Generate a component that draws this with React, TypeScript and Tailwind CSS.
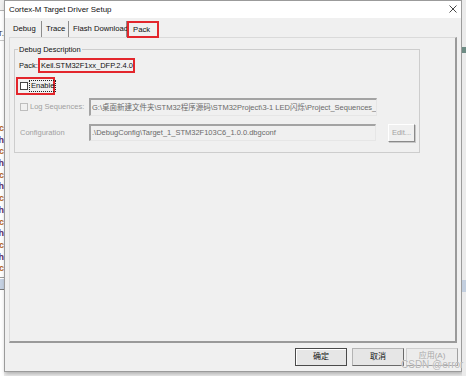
import React from "react";

const editorLetters = [
  { ch: "c", color: "text-[#b5651d]" },
  { ch: "h", color: "text-[#5b2a6e]" },
];

const LeftStrip: React.FC = () => {
  const rows = Array.from({ length: 13 }, (_, i) => editorLetters[i % 2]);
  return (
    <div className="flex h-full w-[4px] shrink-0 flex-col overflow-hidden bg-white">
      <div className="h-[11px] shrink-0 bg-[#f0f0f0] border-b border-[#b4b4b4]" />
      <div className="mt-[18px] flex h-[10px] shrink-0 justify-end text-[8px] leading-[10px] text-[#333]">
        <span className="whitespace-nowrap">T.</span>
      </div>
      <div className="mt-[1px] h-px shrink-0 bg-[#c8c8c8]" />
      <div className="mt-[82px] flex shrink-0 flex-col">
        {rows.map((r, i) => (
          <div
            key={i}
            className={`flex h-[11.7px] justify-end text-[9px] font-bold leading-[11.7px] ${r.color}`}
          >
            <span>{r.ch}</span>
          </div>
        ))}
      </div>
      <div className="mt-[2px] h-px shrink-0 bg-[#9a9a9a]" />
      <div className="mt-[1px] h-[10px] shrink-0 bg-[#c6d2e3]" />
      <div className="h-px shrink-0 bg-[#7a7a7a]" />
    </div>
  );
};

const RightStrip: React.FC = () => (
  <div className="flex h-full flex-1 flex-col bg-[#ebebeb]">
    <div className="mt-[47px] h-[6px] bg-[#6e8c84]" />
    <div className="mt-[227px] h-[12px] bg-[#c3cfdf]" />
  </div>
);

const Tab: React.FC<{ label: string; width: string }> = ({ label, width }) => (
  <div className={`flex h-[16px] items-center border-r border-[#8c8c8c] pl-[4px] ${width}`}>
    <span className="whitespace-nowrap">{label}</span>
  </div>
);

const SunkenField: React.FC<{ text: string; width: string; height: string }> = ({
  text,
  width,
  height,
}) => (
  <div
    className={`flex items-center overflow-hidden border-t-2 border-l-2 border-r border-b border-t-[#a3a3a3] border-l-[#a3a3a3] border-r-[#e6e6e6] border-b-[#e6e6e6] bg-[#f0f0f0] pl-[1px] text-[#6a6a6a] ${width} ${height}`}
  >
    <span className="whitespace-nowrap">{text}</span>
  </div>
);

export default function App() {
  return (
    <div className="relative flex h-[376px] w-[466px] overflow-hidden bg-[#ececec] font-['Liberation_Sans','Noto_Sans_CJK_SC',sans-serif] text-[7.5px] leading-none text-[#111]">
      <LeftStrip />

      <div className="flex h-[372px] w-[458px] shrink-0 flex-col border border-[#9b9b9b] bg-[#f0f0f0] shadow-[1px_2px_4px_rgba(0,0,0,0.25)]">
        {/* title bar */}
        <div className="flex h-[17px] shrink-0 items-center justify-between bg-white pl-[4px] pr-[4px]">
          <span className="whitespace-nowrap text-[7.9px]">Cortex-M Target Driver Setup</span>
          <svg width="8" height="8" viewBox="0 0 8 8" className="mb-[2px]">
            <path d="M0.5 0.5 L7.5 7.5 M7.5 0.5 L0.5 7.5" stroke="#333" strokeWidth="0.9" />
          </svg>
        </div>

        {/* tabs */}
        <div className="flex h-[19px] shrink-0 items-start pl-[4px] pt-[3px] text-[7.7px]">
          <Tab label="Debug" width="w-[33px]" />
          <Tab label="Trace" width="w-[27px]" />
          <Tab label="Flash Download" width="w-[58px]" />
          <div className="relative z-10 flex h-[17px] w-[32px] items-center border-2 border-[#e3262c] bg-[#f0f0f0] pl-[4px]">
            <span>Pack</span>
          </div>
        </div>

        {/* tab panel */}
        <div className="mx-[4px] h-[306px] w-[448px] shrink-0 border border-t-[#dadada] border-l-[#dadada] border-r-2 border-r-[#9a9a9a] border-b-2 border-b-[#9a9a9a] bg-[#f0f0f0]">
          <fieldset className="ml-[4px] mt-[6px] w-[406px] border border-[#cdcdcd] pb-[10px]">
            <legend className="ml-[3px] h-[11px] px-[1px] leading-[11px]">Debug Description</legend>

            <div className="mt-[3px] flex h-[15px] items-center">
              <span className="ml-[4px] w-[19px] whitespace-nowrap">Pack:</span>
              <div className="flex h-[15px] w-[97px] items-center border-2 border-[#e3262c] pl-[1px]">
                <span className="whitespace-nowrap">Keil.STM32F1xx_DFP.2.4.0</span>
              </div>
            </div>

            <div className="mt-[4px] flex h-[18px] items-center">
              <div className="ml-[1px] flex h-[18px] w-[39px] items-center border-2 border-[#e3262c]">
                <div className="ml-[2px] h-[8px] w-[8px] shrink-0 border border-[#444] bg-white" />
                <span className="ml-[1px] whitespace-nowrap border border-dotted border-[#222] px-[1px] py-[1px]">
                  Enable
                </span>
              </div>
            </div>

            <div className="mt-[3px] flex h-[18px] items-center">
              <div className="ml-[5px] h-[8px] w-[8px] shrink-0 border border-[#bdbdbd] bg-[#f0f0f0]" />
              <span className="ml-[2px] w-[59px] whitespace-nowrap text-[#a0a0a0]">Log Sequences:</span>
              <SunkenField
                text="G:\桌面新建文件夹\STM32程序源码\STM32Project\3-1 LED闪烁\Project_Sequences_*.log"
                width="w-[288px]"
                height="h-[18px]"
              />
            </div>

            <div className="mt-[8px] flex h-[18px] items-start">
              <span className="ml-[5px] flex h-[17px] w-[69px] items-center whitespace-nowrap text-[#a0a0a0]">
                Configuration
              </span>
              <SunkenField
                text=".\DebugConfig\Target_1_STM32F103C6_1.0.0.dbgconf"
                width="w-[287px]"
                height="h-[17px]"
              />
              <div className="ml-[12px] flex h-[18px] w-[27px] items-center justify-center border border-t-white border-l-white border-r-[#8a8a8a] border-b-[#8a8a8a] bg-[#f0f0f0] text-[#a3a3a3] shadow-[1px_1px_0_#c8c8c8]">
                Edit...
              </div>
            </div>
          </fieldset>
        </div>

        {/* buttons */}
        <div className="flex flex-1 items-start justify-end pr-[3px] pt-[5px] text-[8px]">
          <div className="flex h-[18px] w-[52px] items-center justify-center border border-[#4a4a4a] bg-[#e6e6e6] shadow-[inset_1px_1px_0_#ffffff]">
            确定
          </div>
          <div className="ml-[5px] flex h-[18px] w-[52px] items-center justify-center border border-[#b4b4b4] border-r-[#6a6a6a] border-b-[#6a6a6a] bg-[#e6e6e6]">
            取消
          </div>
          <div className="ml-[2px] flex h-[18px] w-[52px] items-center justify-center border border-[#cfcfcf] border-r-[#a0a0a0] border-b-[#a0a0a0] bg-[#ececec] pb-[3px] text-[#a8a8a8]">
            应用(A)
          </div>
        </div>
      </div>

      <RightStrip />

      <div className="absolute left-[401px] top-[360px] whitespace-nowrap text-[10px] leading-[10px] text-[#b3b3b3] [text-shadow:0_0_1px_#ffffff]">
        CSDN @error
      </div>
    </div>
  );
}
